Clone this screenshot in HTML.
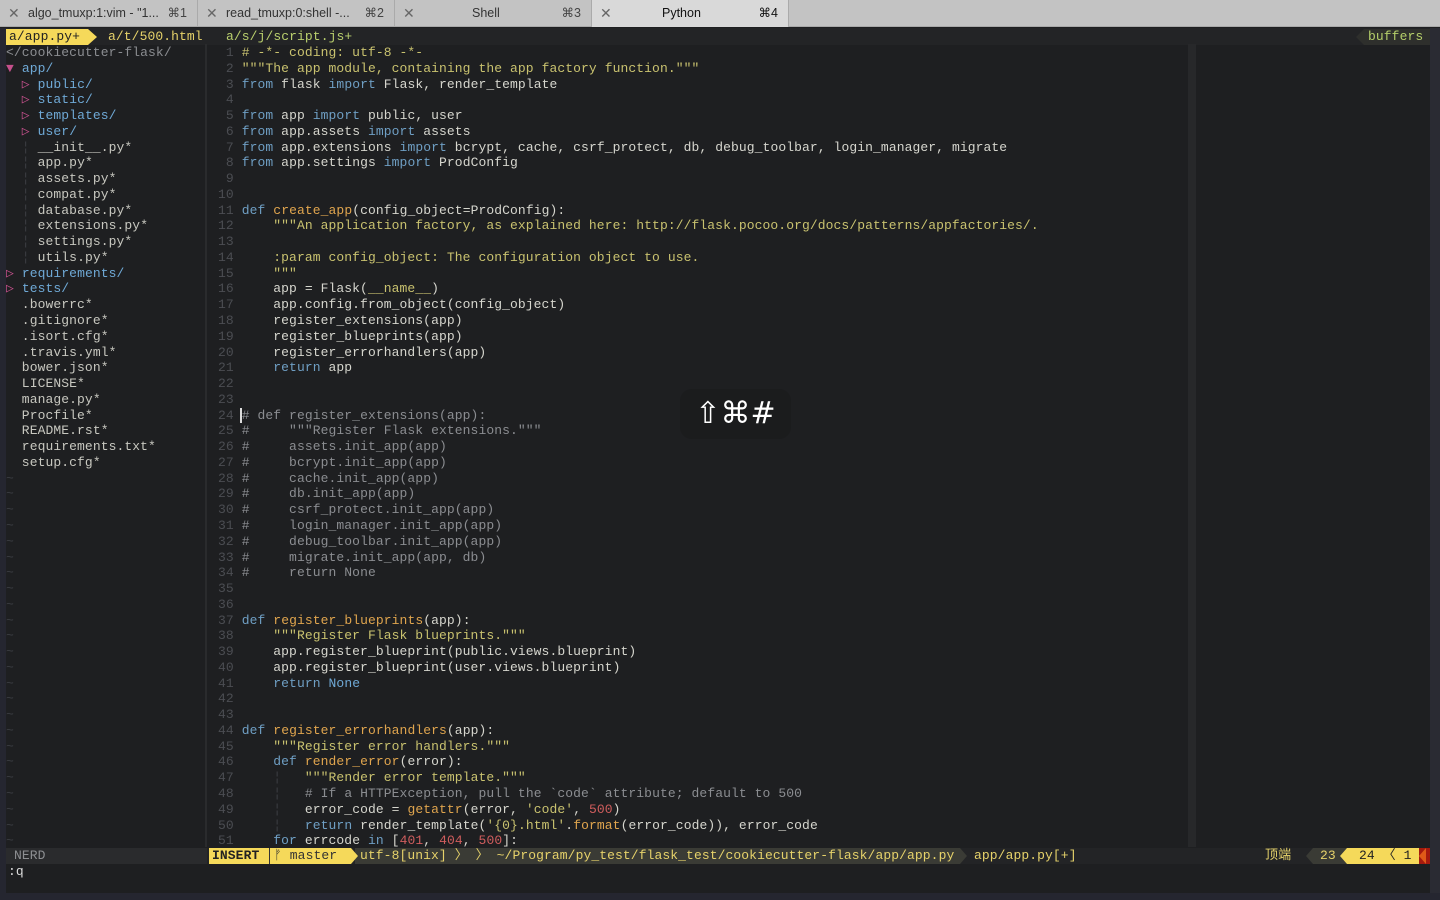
<!DOCTYPE html>
<html><head><meta charset="utf-8"><style>
*{margin:0;padding:0;box-sizing:border-box}
body{width:1440px;height:900px;overflow:hidden;background:#1e1f21;font-family:"Liberation Mono",monospace;font-size:13px;letter-spacing:0.09px;position:relative}
.tabs{position:absolute;left:0;top:0;width:1440px;height:27px;background:#c3c3c3;border-bottom:1px solid #a9a9a9;font-family:"Liberation Sans",sans-serif;font-size:12.5px;color:#333;letter-spacing:0}
.tab{position:absolute;top:0;height:27px;border-right:1px solid #aaa;line-height:27px}
.tab .tx{position:absolute;left:8px;color:#666;font-size:14px}
.tab .tt{position:absolute;left:28px;color:#333}
.tab .tk{position:absolute;right:10px;color:#444}
.act{background:#d9d9d9}
.vim{position:absolute;left:0;top:28px;width:1440px;height:865px;background:#1e1f21}
.row{position:absolute;height:16px;line-height:16px;white-space:pre}
.lpad{position:absolute;left:0;top:28px;width:6px;height:865px;background:#252630}
.rpad{position:absolute;right:0;top:28px;width:10px;height:865px;background:#2a2b33}
.bottom{position:absolute;left:0;top:893px;width:1440px;height:7px;background:#252630}
.sep{position:absolute;left:205px;top:44px;width:2px;height:803px;background:#2a2b2d}
.band{position:absolute;left:1188px;top:44px;width:8px;height:803px;background:#27282a}
.k{color:#6f9fc4}.f{color:#e0a54e}.s{color:#c9c26f}.n{color:#4b4d52}.c{color:#8b8d91}.r{color:#d05d5d}.t{color:#d6d6ce}
.d{color:#6fa9d6}.a{color:#c5508c}.fi{color:#c8c8c0}.tl{color:#3b3d42}
</style></head><body>
<div class="tabs">
<div class="tab" style="left:0;width:198px"><span class="tx">✕</span><span class="tt">algo_tmuxp:1:vim - "1...</span><span class="tk">⌘1</span></div>
<div class="tab" style="left:198px;width:197px"><span class="tx">✕</span><span class="tt">read_tmuxp:0:shell -...</span><span class="tk">⌘2</span></div>
<div class="tab" style="left:395px;width:197px"><span class="tx">✕</span><span class="tt" style="left:77px">Shell</span><span class="tk">⌘3</span></div>
<div class="tab act" style="left:592px;width:197px"><span class="tx">✕</span><span class="tt" style="left:70px;color:#111">Python</span><span class="tk" style="color:#111">⌘4</span></div>
</div>
<div class="vim"></div>
<div class="lpad"></div><div class="rpad"></div><div class="bottom"></div>
<!-- tabline -->
<div style="position:absolute;left:6px;top:28px;width:1424px;height:17px;background:#232426"></div>
<div class="row" style="left:6px;top:29px;width:82px;background:#f5d95a;color:#222;padding-left:3px">a/app.py+</div>
<div style="position:absolute;left:88px;top:29px;width:0;height:0;border-top:8px solid transparent;border-bottom:8px solid transparent;border-left:9px solid #f5d95a"></div>
<div class="row" style="left:108px;top:29px;color:#e6d26a">a/t/500.html</div>
<div class="row" style="left:226px;top:29px;color:#b9cf6d">a/s/j/script.js+</div>
<div style="position:absolute;left:1356px;top:29px;width:0;height:0;border-top:8px solid transparent;border-bottom:8px solid transparent;border-right:8px solid #2e2f2c"></div>
<div class="row" style="left:1364px;top:29px;width:66px;background:#2e2f2c;color:#b5cf6a;padding-left:4px">buffers</div>
<div class="sep"></div><div class="band"></div>
<!-- nerd tree -->
<div class="row" style="left:6px;top:45px;line-height:15.76px;height:auto"><span class="c">&lt;/cookiecutter-flask/</span>
<span class="a">▼</span> <span class="d">app/</span>
  <span class="a">▷</span> <span class="d">public/</span>
  <span class="a">▷</span> <span class="d">static/</span>
  <span class="a">▷</span> <span class="d">templates/</span>
  <span class="a">▷</span> <span class="d">user/</span>
  <span class="tl">¦</span> <span class="fi">__init__.py*</span>
  <span class="tl">¦</span> <span class="fi">app.py*</span>
  <span class="tl">¦</span> <span class="fi">assets.py*</span>
  <span class="tl">¦</span> <span class="fi">compat.py*</span>
  <span class="tl">¦</span> <span class="fi">database.py*</span>
  <span class="tl">¦</span> <span class="fi">extensions.py*</span>
  <span class="tl">¦</span> <span class="fi">settings.py*</span>
  <span class="tl">¦</span> <span class="fi">utils.py*</span>
<span class="a">▷</span> <span class="d">requirements/</span>
<span class="a">▷</span> <span class="d">tests/</span>
  <span class="fi">.bowerrc*</span>
  <span class="fi">.gitignore*</span>
  <span class="fi">.isort.cfg*</span>
  <span class="fi">.travis.yml*</span>
  <span class="fi">bower.json*</span>
  <span class="fi">LICENSE*</span>
  <span class="fi">manage.py*</span>
  <span class="fi">Procfile*</span>
  <span class="fi">README.rst*</span>
  <span class="fi">requirements.txt*</span>
  <span class="fi">setup.cfg*</span>
<span class="tl">~
~
~
~
~
~
~
~
~
~
~
~
~
~
~
~
~
~
~
~
~
~
~
~</span></div>
<!-- code -->
<div class="row t" style="left:218px;top:45px;line-height:15.76px;height:auto"><span class="n"> 1</span> <span class="s"># -*- coding: utf-8 -*-</span>
<span class="n"> 2</span> <span class="s">"""The app module, containing the app factory function."""</span>
<span class="n"> 3</span> <span class="k">from</span> flask <span class="k">import</span> Flask, render_template
<span class="n"> 4</span>
<span class="n"> 5</span> <span class="k">from</span> app <span class="k">import</span> public, user
<span class="n"> 6</span> <span class="k">from</span> app.assets <span class="k">import</span> assets
<span class="n"> 7</span> <span class="k">from</span> app.extensions <span class="k">import</span> bcrypt, cache, csrf_protect, db, debug_toolbar, login_manager, migrate
<span class="n"> 8</span> <span class="k">from</span> app.settings <span class="k">import</span> ProdConfig
<span class="n"> 9</span>
<span class="n">10</span>
<span class="n">11</span> <span class="k">def</span> <span class="f">create_app</span>(config_object=ProdConfig):
<span class="n">12</span>     <span class="s">"""An application factory, as explained here: http://flask.pocoo.org/docs/patterns/appfactories/.</span>
<span class="n">13</span>
<span class="n">14</span>     <span class="s">:param config_object: The configuration object to use.</span>
<span class="n">15</span>     <span class="s">"""</span>
<span class="n">16</span>     app = Flask(<span class="s">__name__</span>)
<span class="n">17</span>     app.config.from_object(config_object)
<span class="n">18</span>     register_extensions(app)
<span class="n">19</span>     register_blueprints(app)
<span class="n">20</span>     register_errorhandlers(app)
<span class="n">21</span>     <span class="k">return</span> app
<span class="n">22</span>
<span class="n">23</span>
<span class="n">24</span> <span style="border-left:2px solid #ddd;margin-left:-2px"></span><span class="c"># def register_extensions(app):
</span><span class="n">25</span> <span class="c">#     """Register Flask extensions."""</span>
<span class="n">26</span> <span class="c">#     assets.init_app(app)</span>
<span class="n">27</span> <span class="c">#     bcrypt.init_app(app)</span>
<span class="n">28</span> <span class="c">#     cache.init_app(app)</span>
<span class="n">29</span> <span class="c">#     db.init_app(app)</span>
<span class="n">30</span> <span class="c">#     csrf_protect.init_app(app)</span>
<span class="n">31</span> <span class="c">#     login_manager.init_app(app)</span>
<span class="n">32</span> <span class="c">#     debug_toolbar.init_app(app)</span>
<span class="n">33</span> <span class="c">#     migrate.init_app(app, db)</span>
<span class="n">34</span> <span class="c">#     return None</span>
<span class="n">35</span>
<span class="n">36</span>
<span class="n">37</span> <span class="k">def</span> <span class="f">register_blueprints</span>(app):
<span class="n">38</span>     <span class="s">"""Register Flask blueprints."""</span>
<span class="n">39</span>     app.register_blueprint(public.views.blueprint)
<span class="n">40</span>     app.register_blueprint(user.views.blueprint)
<span class="n">41</span>     <span class="k">return</span> <span class="d">None</span>
<span class="n">42</span>
<span class="n">43</span>
<span class="n">44</span> <span class="k">def</span> <span class="f">register_errorhandlers</span>(app):
<span class="n">45</span>     <span class="s">"""Register error handlers."""</span>
<span class="n">46</span>     <span class="k">def</span> <span class="f">render_error</span>(error):
<span class="n">47</span>     <span class="tl">¦</span>   <span class="s">"""Render error template."""</span>
<span class="n">48</span>     <span class="tl">¦</span>   <span class="c"># If a HTTPException, pull the `code` attribute; default to 500</span>
<span class="n">49</span>     <span class="tl">¦</span>   error_code = <span class="f">getattr</span>(error, <span class="s">'code'</span>, <span class="r">500</span>)
<span class="n">50</span>     <span class="tl">¦</span>   <span class="k">return</span> render_template(<span class="s">'{0}.html'</span>.<span class="f">format</span>(error_code)), error_code
<span class="n">51</span>     <span class="k">for</span> errcode <span class="k">in</span> [<span class="r">401</span>, <span class="r">404</span>, <span class="r">500</span>]:</div>
<!-- status line -->
<div style="position:absolute;left:6px;top:848px;width:1424px;height:16px;background:#2a2b2d;overflow:hidden"></div>
<div class="row" style="left:14px;top:848px;color:#8d8f92">NERD</div>
<div class="row" style="left:207px;top:848px;width:1223px;background:#232426"></div>
<div class="row" style="left:355px;top:848px;width:605px;background:#3a3b35"></div>
<div class="row" style="left:209px;top:848px;width:60px;background:#f5d95a;color:#222;font-weight:bold;padding-left:3px">INSERT</div>
<div class="row" style="left:269px;top:848px;width:82px;background:#f5d95a;color:#333;padding-left:4px;border-left:1px solid #333">ᚠ master</div>
<div style="position:absolute;left:351px;top:848px;width:0;height:0;border-top:8px solid transparent;border-bottom:8px solid transparent;border-left:7px solid #f5d95a"></div>
<div class="row" style="left:360px;top:848px;color:#e6d26a">utf-8[unix] 〉 〉 ~/Program/py_test/flask_test/cookiecutter-flask/app/app.py</div>
<div style="position:absolute;left:960px;top:848px;width:0;height:0;border-top:8px solid transparent;border-bottom:8px solid transparent;border-left:7px solid #3a3b35"></div>
<div class="row" style="left:974px;top:848px;color:#e6d26a">app/app.py[+]</div>
<div class="row" style="left:1265px;top:848px;color:#e6d26a;font-family:'Liberation Mono','Noto Sans CJK SC',monospace">顶端</div>
<div style="position:absolute;left:1306px;top:848px;width:0;height:0;border-top:8px solid transparent;border-bottom:8px solid transparent;border-right:7px solid #3a3b35"></div>
<div class="row" style="left:1313px;top:848px;width:34px;background:#3a3b35;color:#e6d26a;padding-left:7px">23</div>
<div style="position:absolute;left:1340px;top:848px;width:0;height:0;border-top:8px solid transparent;border-bottom:8px solid transparent;border-right:7px solid #f5d95a"></div>
<div class="row" style="left:1347px;top:848px;width:72px;background:#f5d95a;color:#222;padding-left:12px">24 〈 1</div>
<div style="position:absolute;left:1419px;top:848px;width:11px;height:16px;background:#a51a0e"></div>
<div style="position:absolute;left:1419px;top:848px;width:0;height:0;border-top:8px solid transparent;border-bottom:8px solid transparent;border-right:7px solid #e05a18"></div>
<div class="row" style="left:8px;top:864px;color:#ddd">:q</div>
<!-- overlay -->
<div style="position:absolute;left:680px;top:389px;width:111px;height:50px;background:#1b1c1d;border-radius:12px;color:#fff;font-family:'DejaVu Sans',sans-serif;font-size:30px;line-height:50px;text-align:center;letter-spacing:0">⇧⌘#</div>
</body></html>
